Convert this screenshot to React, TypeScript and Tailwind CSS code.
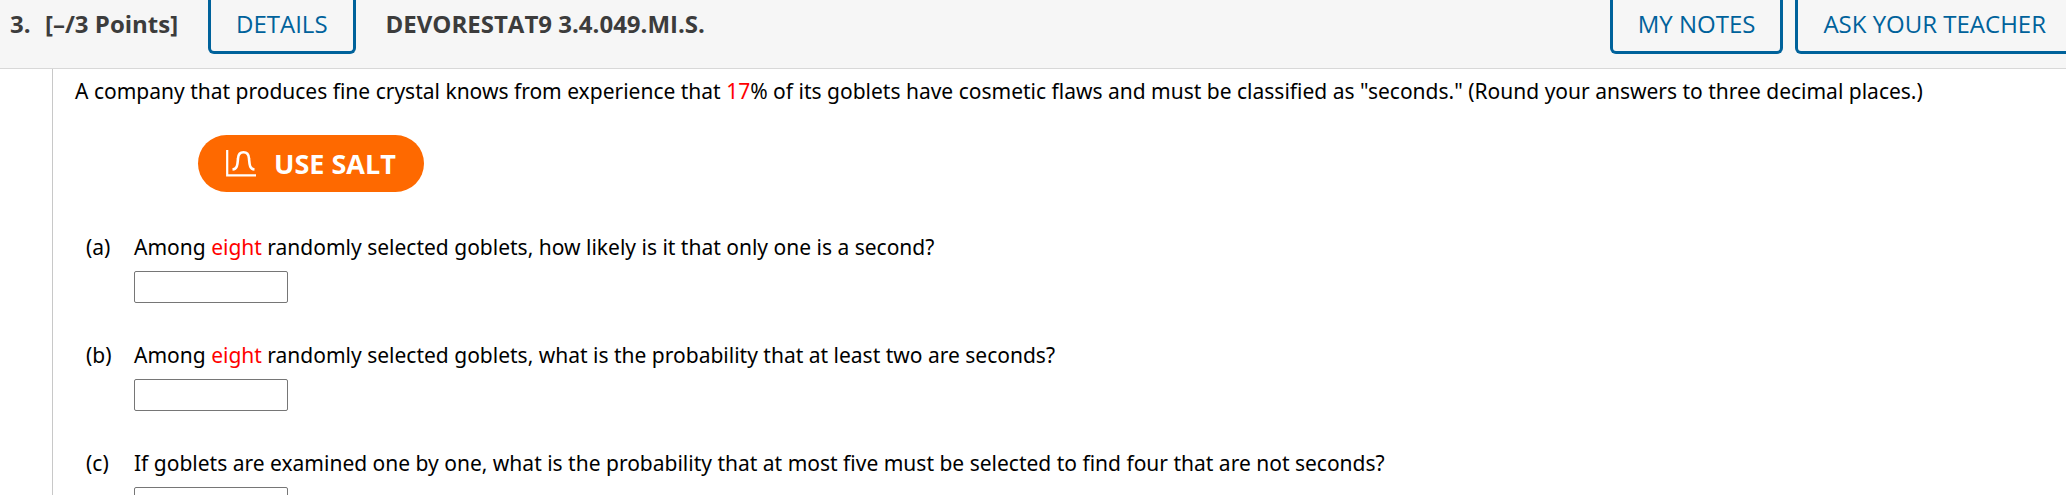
import type { ReactNode } from "react";

const outline =
  "h-[54px] shrink-0 cursor-pointer whitespace-nowrap rounded-b-md border-[3px] border-t-0 border-[#00629b] px-[25px] pb-1 text-2xl font-medium text-[#00629b]";

function Red({ children }: { children: ReactNode }) {
  return <span className="text-[#ff0000]">{children}</span>;
}

function Part({ letter, children }: { letter: string; children: ReactNode }) {
  const id = `answer-${letter}`;
  return (
    <li className="flex h-[108px]">
      <span className="w-12 shrink-0">({letter})</span>
      <div className="flex flex-col items-start gap-2.5">
        <label htmlFor={id}>{children}</label>
        <input
          id={id}
          type="text"
          className="h-8 w-[154px] rounded-[2px] border border-[#767676] bg-white px-1"
        />
      </div>
    </li>
  );
}

function CurveIcon() {
  return (
    <svg viewBox="0 0 32 28" className="h-7 w-8 shrink-0" fill="none" stroke="#fff" aria-hidden="true">
      <path d="M1.2 0V25.4H30" strokeWidth="2.2" />
      <path
        d="M6.5 19.5C11.8 19 11.5 13.5 12 8.5C12.3 4 14 2.3 17.5 2.3C21 2.3 22.7 4 23 8.5C23.5 13.5 23.2 19 28.5 19.5"
        strokeWidth="2.6"
      />
    </svg>
  );
}

export default function App() {
  return (
    <div className="h-screen overflow-hidden bg-white">
      <header className="flex items-start overflow-hidden border-b border-[#d8d8d8] bg-[#f6f6f6] pb-[14px] pl-2.5 font-['Open_Sans',sans-serif] text-2xl font-bold text-[#3c3c3c]">
        <span className="w-[35px] shrink-0 pt-2">3.</span>
        <span className="w-[163px] shrink-0 whitespace-nowrap pt-2">[–/3 Points]</span>
        <button type="button" className={outline}>DETAILS</button>
        <h1 className="ml-[30px] whitespace-nowrap pt-2">DEVORESTAT9 3.4.049.MI.S.</h1>
        <div className="-mr-2 ml-auto flex gap-3">
          <button type="button" className={outline}>MY NOTES</button>
          <button type="button" className={outline}>ASK YOUR TEACHER</button>
        </div>
      </header>
      <main className="ml-[52px] min-h-full border-l border-[#c8c8c8] pl-[22px] pt-2 font-['Noto_Sans',sans-serif] text-[21px] leading-7 text-black">
        <p>
          A company that produces fine crystal knows from experience that <Red>17</Red>% of its goblets have
          cosmetic flaws and must be classified as "seconds." (Round your answers to three decimal places.)
        </p>
        <button
          type="button"
          className="ml-[123px] mt-[30px] flex h-[57px] cursor-pointer items-center gap-4 rounded-full bg-[#fe6900] px-7 font-['Open_Sans',sans-serif] text-[27px] font-bold text-white"
        >
          <CurveIcon />
          USE SALT
        </button>
        <ol className="mt-[41px] pl-[11px]">
          <Part letter="a">
            Among <Red>eight</Red> randomly selected goblets, how likely is it that only one is a second?
          </Part>
          <Part letter="b">
            Among <Red>eight</Red> randomly selected goblets, what is the probability that at least two are seconds?
          </Part>
          <Part letter="c">
            If goblets are examined one by one, what is the probability that at most five must be selected to find
            four that are not seconds?
          </Part>
        </ol>
      </main>
    </div>
  );
}
